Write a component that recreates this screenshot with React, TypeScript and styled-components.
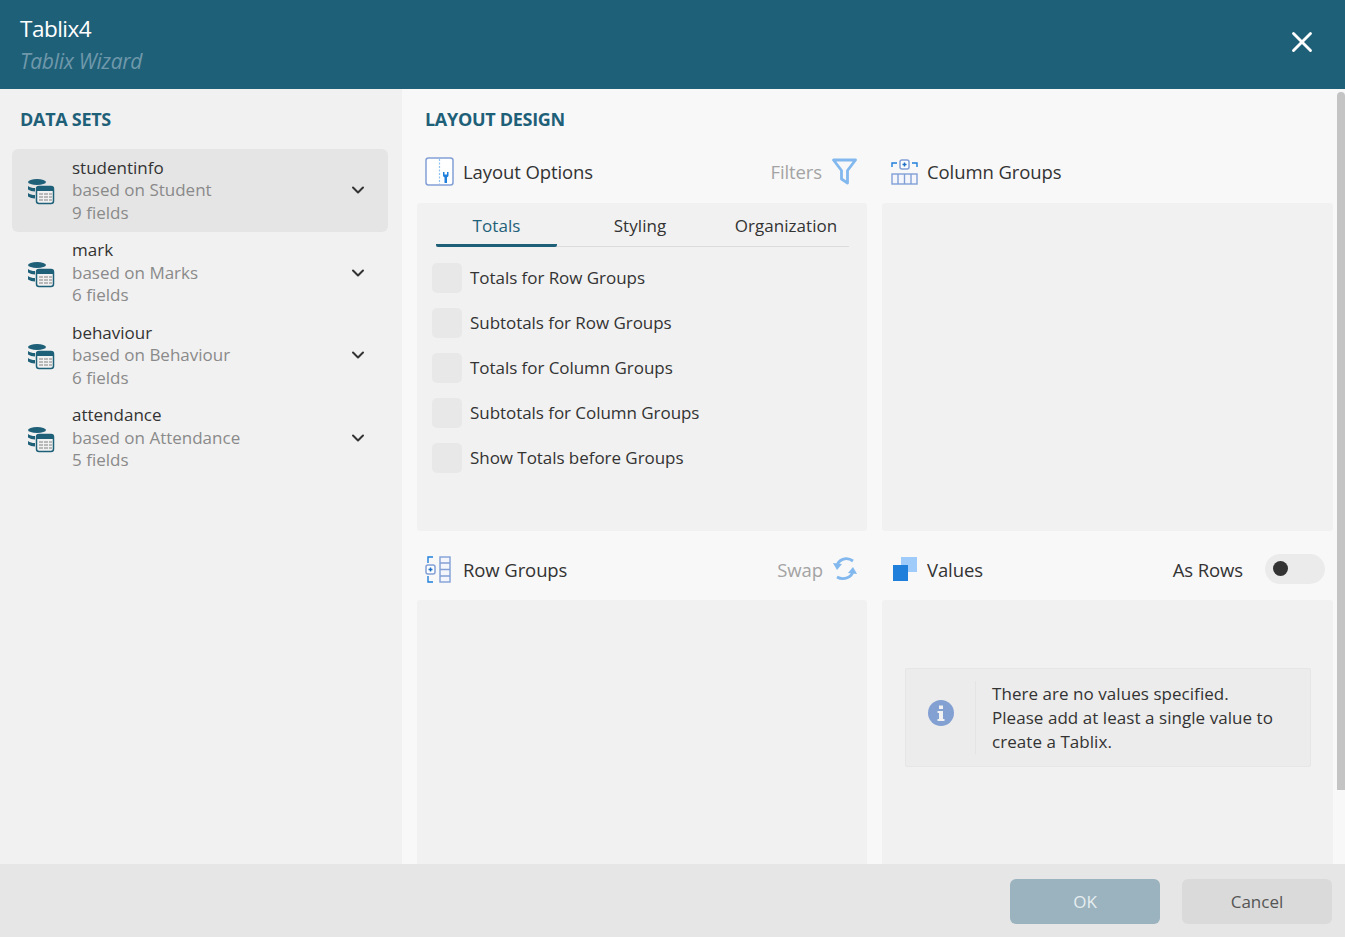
import React from 'react';
import styled, { createGlobalStyle } from 'styled-components';
import { ChevronDown, X } from 'lucide-react';

const GlobalStyle = createGlobalStyle`
  html, body {
    margin: 0;
    height: 100%;
    overflow: hidden;
    font-family: "Open Sans", "Noto Sans", "Liberation Sans", sans-serif;
    color: #333;
  }
  #root { height: 100%; }
  * { box-sizing: border-box; }
`;

const Dialog = styled.div`
  width: 1345px;
  height: 937px;
  display: grid;
  grid-template-rows: 89px 775px 73px;
  overflow: hidden;
`;

const Header = styled.header`
  background: #1f6079;
  display: flex;
  justify-content: space-between;
  align-items: center;
  padding: 0 26px 6px 20px;
`;

const HeaderTitles = styled.div`
  display: flex;
  flex-direction: column;
  padding-top: 7px;
`;

const Title = styled.div`
  color: #fff;
  font-size: 22.5px;
  line-height: 32px;
  letter-spacing: -0.5px;
  margin-top: -2px;
  margin-bottom: 1px;
`;

const Subtitle = styled.div`
  color: #6f98aa;
  font-size: 21px;
  line-height: 30px;
  font-style: italic;
  letter-spacing: -0.25px;
`;

const Body = styled.div`
  display: grid;
  grid-template-columns: 402px 1fr;
  min-height: 0;
  overflow: hidden;
`;

const Sidebar = styled.aside`
  background: #f1f1f1;
  padding: 18px 14px 0 12px;
`;

const SectionTitle = styled.h2`
  margin: 0;
  font-size: 18px;
  line-height: 24px;
  font-weight: 700;
  color: #1f6079;
  letter-spacing: -0.3px;
`;

const SidebarTitle = styled(SectionTitle)`
  padding-left: 8px;
  margin-bottom: 18px;
`;

const DataSetRow = styled.div<{ $active?: boolean }>`
  height: 82.5px;
  display: grid;
  grid-template-columns: 60px 1fr 60px;
  align-items: center;
  border-radius: 6px;
  background: ${({ $active }) => ($active ? '#e5e5e5' : 'transparent')};
`;

const DataSetIconWrap = styled.div`
  padding: 4px 0 0 16px;
  display: flex;
`;

const DataSetText = styled.div`
  display: flex;
  flex-direction: column;
  padding-top: 0.6px;
  font-size: 17px;
  line-height: 22.5px;
  color: #8a8a8a;
`;

const DataSetName = styled.span`
  color: #333;
`;

const ChevronWrap = styled.div`
  display: flex;
  padding-left: 20px;
  color: #333;
`;

const Main = styled.main`
  background: #f8f8f8;
  position: relative;
  padding: 18px 12px 0 15px;
  overflow: hidden;
`;

const ScrollThumb = styled.div`
  position: absolute;
  top: 3px;
  right: 0;
  width: 8px;
  height: 698px;
  background: #c4c4c4;
  border-radius: 4px 4px 0 0;
`;

const MainTitle = styled(SectionTitle)`
  padding-left: 8px;
`;

const Columns = styled.div`
  display: grid;
  grid-template-columns: 450px 451px;
  grid-template-rows: 72px 328px 69px 400px;
  column-gap: 15px;
`;

const PanelHead = styled.div`
  display: flex;
  align-items: center;
  padding: 0 10px 0 8px;
  font-size: 18.5px;
  letter-spacing: -0.1px;
  color: #333;
`;

const TopHead = styled(PanelHead)`
  padding-top: 9px;
`;

const BottomHead = styled(PanelHead)`
  padding-top: 7px;
`;

const HeadIcon = styled.div<{ $tight?: boolean }>`
  width: ${({ $tight }) => ($tight ? '29px' : '30px')};
  margin-right: 8px;
  display: flex;
`;

const HeadLabel = styled.span`
  flex: 1;
`;

const HeadAction = styled.span<{ $muted?: boolean; $gap: number }>`
  color: ${({ $muted }) => ($muted ? '#a3a3a3' : '#333')};
  margin-right: ${({ $gap }) => $gap}px;
`;

const Panel = styled.section`
  background: #f1f1f1;
  border-radius: 3px;
`;

const OptionsPanel = styled(Panel)`
  padding: 8px 18px 0 15px;
`;

const Tabs = styled.div`
  display: grid;
  grid-template-columns: 121px 166px 126px;
  margin-left: 4px;
  border-bottom: 1px solid #dcdcdc;
  height: 36px;
`;

const Tab = styled.div<{ $active?: boolean }>`
  text-align: center;
  font-size: 17px;
  line-height: 30px;
  letter-spacing: 0.05px;
  color: ${({ $active }) => ($active ? '#1f6079' : '#333')};
  height: 36px;
  border-bottom: ${({ $active }) => ($active ? '3px solid #1f6079' : 'none')};
  border-radius: 0 0 2px 2px;
`;

const CheckList = styled.div`
  display: flex;
  flex-direction: column;
  gap: 15px;
  padding-top: 16px;
`;

const CheckRow = styled.label`
  display: flex;
  align-items: center;
  gap: 8px;
  font-size: 17px;
  letter-spacing: -0.05px;
  color: #333;
`;

const CheckBox = styled.span`
  width: 30px;
  height: 30px;
  border-radius: 5px;
  background: #e8e8e8;
`;

const CheckText = styled.span`
  padding-bottom: 2px;
`;

const ValuesPanel = styled(Panel)`
  padding: 68px 22px 0 23px;
`;

const InfoBox = styled.div`
  height: 99px;
  border: 1px solid #e6e6e6;
  background: #ececec;
  border-radius: 2px;
  display: grid;
  grid-template-columns: 69px 1fr;
  align-items: center;
`;

const InfoIcon = styled.div`
  display: flex;
  justify-content: center;
  padding-bottom: 9px;
`;

const InfoText = styled.div`
  border-left: 1px solid #e4e4e4;
  padding: 1px 0 0 16px;
  height: 73px;
  font-size: 17px;
  line-height: 24px;
  letter-spacing: 0.05px;
  color: #333;
`;

const Toggle = styled.div`
  width: 60px;
  height: 30px;
  border-radius: 15px;
  background: #ebebeb;
  display: flex;
  align-items: center;
  padding: 0 0 2px 8px;
  margin-right: -2px;
`;

const Knob = styled.span`
  width: 15px;
  height: 15px;
  border-radius: 50%;
  background: #333;
`;

const Footer = styled.footer`
  background: #e6e6e6;
  display: flex;
  justify-content: flex-end;
  gap: 22px;
  padding: 15px 13px 0 0;
`;

const Button = styled.button<{ $primary?: boolean }>`
  width: 150px;
  height: 45px;
  border: none;
  border-radius: 6px;
  font-family: inherit;
  font-size: 17px;
  letter-spacing: 0;
  background: ${({ $primary }) => ($primary ? '#9bb3be' : '#dadada')};
  color: ${({ $primary }) => ($primary ? '#e6edf0' : '#555')};
`;

function DataSetIcon() {
  return (
    <svg width="27" height="26" viewBox="0 0 27 26">
      <ellipse cx="9" cy="3" rx="9" ry="3" fill="#1f6079" />
      <path d="M0 7c2 1.500 4 2 7 2v3.500c-3 0-5-.8-7-2zM0 14c2 1.500 4 2 7 2v3.500c-3 0-5-.8-7-2z" fill="#1f6079" />
      <rect x="8.500" y="7.500" width="17" height="17" rx="2.500" fill="#f1f1f1" stroke="#1f6079" stroke-width="1.500" />
      <path d="M9 8.500a2 2 0 0 1 2-1h12a2 2 0 0 1 2 1V12H9z" fill="#1f6079" />
      <path d="M11 14h4v2h-4zM16 14h4v2h-4zM21 14h3v2h-3zM11 17h4v2h-4zM16 17h4v2h-4zM21 17h3v2h-3zM11 20h4v2h-4zM16 20h4v2h-4zM21 20h3v2h-3z" fill="#b9b9b9" />
    </svg>
  );
}

function LayoutIcon() {
  return (
    <svg width="29" height="29" viewBox="0 0 29 29">
      <rect x="1" y="1" width="27" height="27" rx="2.500" fill="#fff" stroke="#82a0d6" stroke-width="1.500" />
      <path d="M14.500 2v25" stroke="#8fc1f2" stroke-width="1.200" stroke-dasharray="2 1.500" />
      <path d="M18 15v3.500a2 2 0 0 0 1.500 1.800V26h2.500v-5.700a2 2 0 0 0 1.500-1.800V15h-1.500v2.500h-2.500V15z" fill="#1f7fdb" />
    </svg>
  );
}

function FilterIcon() {
  return (
    <svg width="25" height="27" viewBox="0 0 25 27">
      <path d="M1.500 2h22l-8 10.500V25l-6-4v-8.500z" fill="none" stroke="#82b8ee" stroke-width="2.800" stroke-linejoin="round" />
    </svg>
  );
}

function ColumnGroupsIcon() {
  return (
    <svg width="28" height="26" viewBox="-1 0 28 26">
      <path d="M1 8V4h5M26 8V4h-5" fill="none" stroke="#1f7fdb" stroke-width="1.400" />
      <rect x="9" y="1" width="9" height="9" rx="2" fill="#fff" stroke="#82a0d6" stroke-width="1.500" />
      <path d="M13.500 3.500v4M11.500 5.500h4" stroke="#1f6fc4" stroke-width="1.500" />
      <rect x="1" y="15" width="25" height="10" fill="#f4f6fb" stroke="#82a0d6" stroke-width="1.400" />
      <path d="M7 15v10M13.500 15v10M20 15v10" stroke="#82a0d6" stroke-width="1.400" />
    </svg>
  );
}

function RowGroupsIcon() {
  return (
    <svg width="26" height="27" viewBox="0 0 26 27">
      <path d="M8 1H3v6M8 26H3v-6" fill="none" stroke="#1f7fdb" stroke-width="1.400" />
      <rect x="1" y="9" width="9" height="9" rx="2" fill="#fff" stroke="#82a0d6" stroke-width="1.500" />
      <path d="M5.500 11.500v4M3.500 13.500h4" stroke="#1f6fc4" stroke-width="1.500" />
      <rect x="15" y="1" width="10" height="25" fill="#f4f6fb" stroke="#82a0d6" stroke-width="1.400" />
      <path d="M15 7h10M15 13.500h10M15 20h10" stroke="#82a0d6" stroke-width="1.400" />
    </svg>
  );
}

function SwapIcon() {
  return (
    <svg width="24" height="26" viewBox="0 0 24 26">
      <path d="M4 10C5 4 13 0 20 5" fill="none" stroke="#82b8ee" stroke-width="2.800" />
      <path d="M0 7l9 1-5 6z" fill="#82b8ee" />
      <path d="M20 15C19 21 11 25 4 21" fill="none" stroke="#82b8ee" stroke-width="2.800" />
      <path d="M24 18l-9-1 5-6z" fill="#82b8ee" />
    </svg>
  );
}

function ValuesIcon() {
  return (
    <svg width="27" height="25" viewBox="-3 0 27 25">
      <rect x="8" y="0" width="16" height="15" fill="#9fcbfa" />
      <rect x="0" y="8" width="15" height="16" fill="#1f7fdb" />
    </svg>
  );
}

function InfoCircle() {
  return (
    <svg width="26" height="26" viewBox="0 0 26 26">
      <circle cx="13" cy="13" r="13" fill="#83a0d3" />
      <rect x="11" y="5.500" width="4" height="3.500" fill="#f1f1f1" />
      <path d="M9.500 11h5.500v8h1.500v2h-7v-2H11v-6H9.500z" fill="#f1f1f1" />
    </svg>
  );
}

const dataSets = [
  { name: 'studentinfo', base: 'based on Student', fields: '9 fields', active: true },
  { name: 'mark', base: 'based on Marks', fields: '6 fields' },
  { name: 'behaviour', base: 'based on Behaviour', fields: '6 fields' },
  { name: 'attendance', base: 'based on Attendance', fields: '5 fields' },
];

const totals = [
  'Totals for Row Groups',
  'Subtotals for Row Groups',
  'Totals for Column Groups',
  'Subtotals for Column Groups',
  'Show Totals before Groups',
];

export default function App() {
  return (
    <Dialog>
      <GlobalStyle />
      <Header>
        <HeaderTitles>
          <Title>Tablix4</Title>
          <Subtitle>Tablix Wizard</Subtitle>
        </HeaderTitles>
        <X size={34} color="#fff" strokeWidth={2} />
      </Header>
      <Body>
        <Sidebar>
          <SidebarTitle>DATA SETS</SidebarTitle>
          {dataSets.map((d) => (
            <DataSetRow key={d.name} $active={d.active}>
              <DataSetIconWrap>
                <DataSetIcon />
              </DataSetIconWrap>
              <DataSetText>
                <DataSetName>{d.name}</DataSetName>
                <span>{d.base}</span>
                <span>{d.fields}</span>
              </DataSetText>
              <ChevronWrap>
                <ChevronDown size={20} strokeWidth={2.4} />
              </ChevronWrap>
            </DataSetRow>
          ))}
        </Sidebar>
        <Main>
          <MainTitle>LAYOUT DESIGN</MainTitle>
          <Columns>
            <TopHead>
              <HeadIcon><LayoutIcon /></HeadIcon>
              <HeadLabel>Layout Options</HeadLabel>
              <HeadAction $muted $gap={10}>Filters</HeadAction>
              <FilterIcon />
            </TopHead>
            <TopHead>
              <HeadIcon $tight><ColumnGroupsIcon /></HeadIcon>
              <HeadLabel>Column Groups</HeadLabel>
            </TopHead>
            <OptionsPanel>
              <Tabs>
                <Tab $active>Totals</Tab>
                <Tab>Styling</Tab>
                <Tab>Organization</Tab>
              </Tabs>
              <CheckList>
                {totals.map((t) => (
                  <CheckRow key={t}>
                    <CheckBox />
                    <CheckText>{t}</CheckText>
                  </CheckRow>
                ))}
              </CheckList>
            </OptionsPanel>
            <Panel />
            <BottomHead>
              <HeadIcon><RowGroupsIcon /></HeadIcon>
              <HeadLabel>Row Groups</HeadLabel>
              <HeadAction $muted $gap={10}>Swap</HeadAction>
              <SwapIcon />
            </BottomHead>
            <BottomHead>
              <HeadIcon $tight><ValuesIcon /></HeadIcon>
              <HeadLabel>Values</HeadLabel>
              <HeadAction $gap={22}>As Rows</HeadAction>
              <Toggle><Knob /></Toggle>
            </BottomHead>
            <Panel />
            <ValuesPanel>
              <InfoBox>
                <InfoIcon><InfoCircle /></InfoIcon>
                <InfoText>
                  There are no values specified.
                  <br />
                  Please add at least a single value to
                  <br />
                  create a Tablix.
                </InfoText>
              </InfoBox>
            </ValuesPanel>
          </Columns>
          <ScrollThumb />
        </Main>
      </Body>
      <Footer>
        <Button $primary>OK</Button>
        <Button>Cancel</Button>
      </Footer>
    </Dialog>
  );
}
